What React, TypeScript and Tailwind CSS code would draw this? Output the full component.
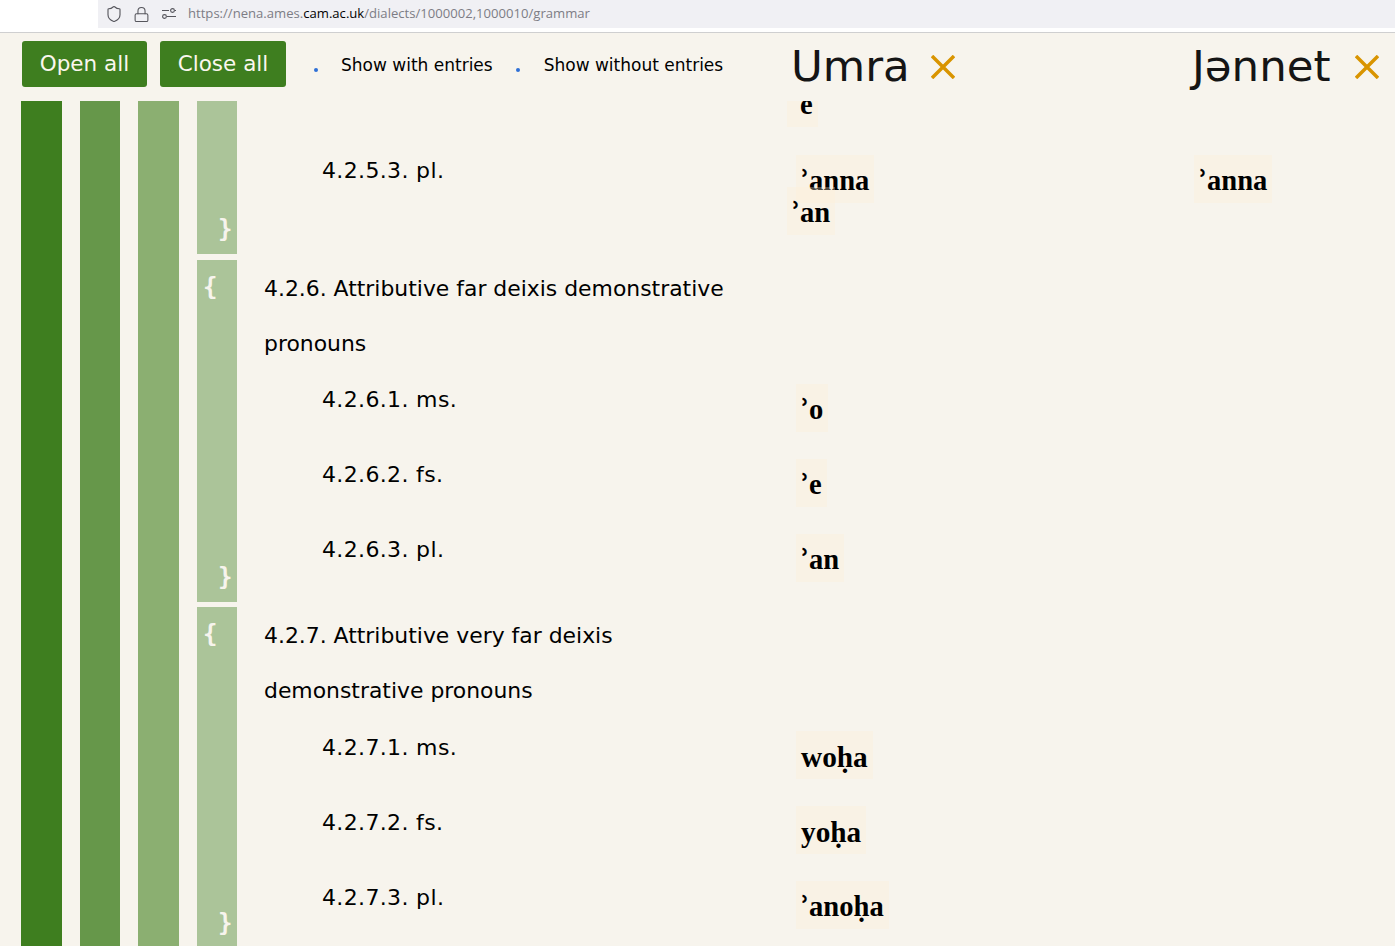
import { Lock, Shield } from "lucide-react";

type Variant = { text: string; pull?: boolean };

type Row = {
  label: string;
  umra: Variant[];
  jennet?: string;
};

type Group = {
  title?: string[];
  rows: Row[];
  wrapClass?: string;
  bodyClass: string;
  labelClass: string;
};

const groups: Group[] = [
  {
    bodyClass: "flex-1 pb-[6px]",
    labelClass: "w-[550px] pt-[15px] pl-[85px] text-[22px] leading-[29px] tracking-[0.35px] text-black",
    rows: [
      { label: "", umra: [{ text: "ʾe", pull: true }] },
      {
        label: "4.2.5.3. pl.",
        umra: [{ text: "ʾanna" }, { text: "ʾan", pull: true }],
        jennet: "ʾanna",
      },
    ],
  },
  {
    title: ["4.2.6. Attributive far deixis demonstrative", "pronouns"],
    bodyClass: "flex-1 pb-[7px]",
    labelClass: "w-[550px] pt-[15px] pl-[85px] text-[22px] leading-[29px] tracking-[0.35px] text-black",
    rows: [
      { label: "4.2.6.1. ms.", umra: [{ text: "ʾo" }] },
      { label: "4.2.6.2. fs.", umra: [{ text: "ʾe" }] },
      { label: "4.2.6.3. pl.", umra: [{ text: "ʾan" }] },
    ],
  },
  {
    title: ["4.2.7. Attributive very far deixis", "demonstrative pronouns"],
    wrapClass: "-mt-[1px]",
    bodyClass: "flex-1 pb-[6px]",
    labelClass: "w-[550px] pt-[16px] pl-[85px] text-[22px] leading-[29px] tracking-[0.35px] text-black",
    rows: [
      { label: "4.2.7.1. ms.", umra: [{ text: "woḥa" }] },
      { label: "4.2.7.2. fs.", umra: [{ text: "yoḥa" }] },
      { label: "4.2.7.3. pl.", umra: [{ text: "ʾanoḥa" }] },
    ],
  },
];

function Chip({ text, pull }: Variant) {
  const hasAyin = text.startsWith("ʾ");
  return (
    <div
      className={[
        "w-fit bg-[#ffedd5]/30 px-[5px] pt-[10px] pb-[6px] font-['Liberation_Serif',serif] leading-[32px] font-bold text-black",
        pull ? "" : "ml-[9px]",
        hasAyin ? "text-[28.6px]" : "text-[29.3px]",
      ].join(" ")}
    >
      {hasAyin ? (
        <>
          <span className="relative top-[1px] -mr-[1px] -ml-[2px] font-['DejaVu_Serif',serif] text-[30px] leading-[0]">ʾ</span>
          {text.slice(1)}
        </>
      ) : (
        text
      )}
    </div>
  );
}

function CloseMark() {
  return (
    <svg className="h-[24px] w-[24px] text-[#d99400]" viewBox="0 0 24 24" fill="none" stroke="currentColor" strokeWidth="3.5">
      <path d="M1 1l22 22M23 1L1 23" />
    </svg>
  );
}

function BrowserBar() {
  return (
    <div className="h-[33px] border-b border-[#cfcfd0] bg-white">
      <div className="ml-[98px] flex h-[28px] items-center bg-[#f0f0f4] text-[#55555c]">
        <Shield className="ml-[7px] h-[18px] w-[18px]" strokeWidth={1.5} />
        <Lock className="ml-[10px] h-[17px] w-[17px]" strokeWidth={1.5} />
        <svg className="ml-[11px] h-[14px] w-[16px]" viewBox="0 0 16 14" fill="none" stroke="currentColor" strokeWidth="1.1">
          <path d="M8 3.5H1M15 3.5h-1M6 9.500h9" />
          <circle cx="11.500" cy="3.500" r="1.900" />
          <circle cx="3.500" cy="9.500" r="1.900" />
        </svg>
        <span className="ml-[11px] font-['Open_Sans',sans-serif] text-[13.1px] text-[#7d7d85]">
          https://nena.ames.<span className="text-black">cam.ac.uk</span>/dialects/1000002,1000010/grammar
        </span>
      </div>
    </div>
  );
}

function Header() {
  return (
    <div className="flex h-[68px] font-['DejaVu_Sans',sans-serif]">
      <div className="flex w-[787px] items-start pt-2 pl-[22px]">
        <button className="h-[46px] w-[125px] rounded-[3px] bg-[#3e7e1f] pt-[1px] text-center text-[21.5px] text-[#fbf7ee]">
          Open all
        </button>
        <button className="ml-[13px] h-[46px] w-[126px] rounded-[3px] bg-[#3e7e1f] pt-[1px] text-center text-[21.5px] text-[#fbf7ee]">
          Close all
        </button>
        <div className="ml-[28px] flex h-[46px] items-center text-[17px] text-black">
          <span className="mt-[12px] h-[4px] w-[4px] rounded-full bg-[#2f6fd6]" />
          <span className="mt-[3px] ml-[23px]">Show with entries</span>
          <span className="mt-[12px] ml-[23px] h-[4px] w-[4px] rounded-full bg-[#2f6fd6]" />
          <span className="mt-[3px] ml-[24px]">Show without entries</span>
        </div>
      </div>
      <div className="flex w-[398px] items-center pl-[4px]">
        <span className="text-[43.5px] leading-none text-[#151515]">Umra</span>
        <span className="ml-[21px]">
          <CloseMark />
        </span>
      </div>
      <div className="flex flex-1 items-center pl-[7px]">
        <span className="text-[43.5px] leading-none text-[#151515]">Jənnet</span>
        <span className="ml-[24px]">
          <CloseMark />
        </span>
      </div>
    </div>
  );
}

function GroupBlock({ group }: { group: Group }) {
  return (
    <div className={`flex shrink-0 ${group.wrapClass ?? ""}`}>
      <div className="flex w-[40px] shrink-0 flex-col justify-between bg-[#abc499] pb-[9px] font-['DejaVu_Sans_Mono','DejaVu_Sans',monospace] text-[24px] leading-[32px] font-bold text-[#f7f4ed]">
        <span className="pt-[11px] pl-[6px]">{group.title ? "{" : ""}</span>
        <span className="pl-[21px]">{"}"}</span>
      </div>
      <div className={group.bodyClass}>
        {group.title && (
          <div className="pt-[1px] -mb-[1px] pl-[27px] text-[21.9px] leading-[55px] text-black">
            {group.title.map((line) => (
              <div key={line}>{line}</div>
            ))}
          </div>
        )}
        {group.rows.map((row) => (
          <div key={row.label} className={row.label ? "flex min-h-[75px]" : "flex h-[40px]"}>
            <div className={group.labelClass}>{row.label}</div>
            <div className={row.label ? "w-[398px] pt-[14px] pb-[13px]" : "w-[398px] -mt-[22px]"}>
              {row.umra.map((v) => (
                <div key={v.text} className={v.pull ? "relative -mt-[16px] first:mt-0" : ""}>
                  <Chip {...v} />
                </div>
              ))}
            </div>
            <div className="flex-1 pt-[14px]">{row.jennet && <Chip text={row.jennet} />}</div>
          </div>
        ))}
      </div>
    </div>
  );
}

export default function App() {
  return (
    <div className="flex h-[946px] flex-col overflow-hidden bg-[#f7f4ed] font-['DejaVu_Sans',sans-serif]">
      <BrowserBar />
      <Header />
      <div className="flex min-h-0 flex-1 overflow-hidden pl-[21px]">
        <div className="w-[41px] shrink-0 bg-[#3e7e1f]" />
        <div className="ml-[18px] w-[40px] shrink-0 bg-[#66974a]" />
        <div className="ml-[18px] w-[41px] shrink-0 bg-[#8baf71]" />
        <div className="ml-[18px] flex flex-1 flex-col gap-[6px]">
          {groups.map((group, i) => (
            <GroupBlock key={i} group={group} />
          ))}
        </div>
      </div>
    </div>
  );
}
